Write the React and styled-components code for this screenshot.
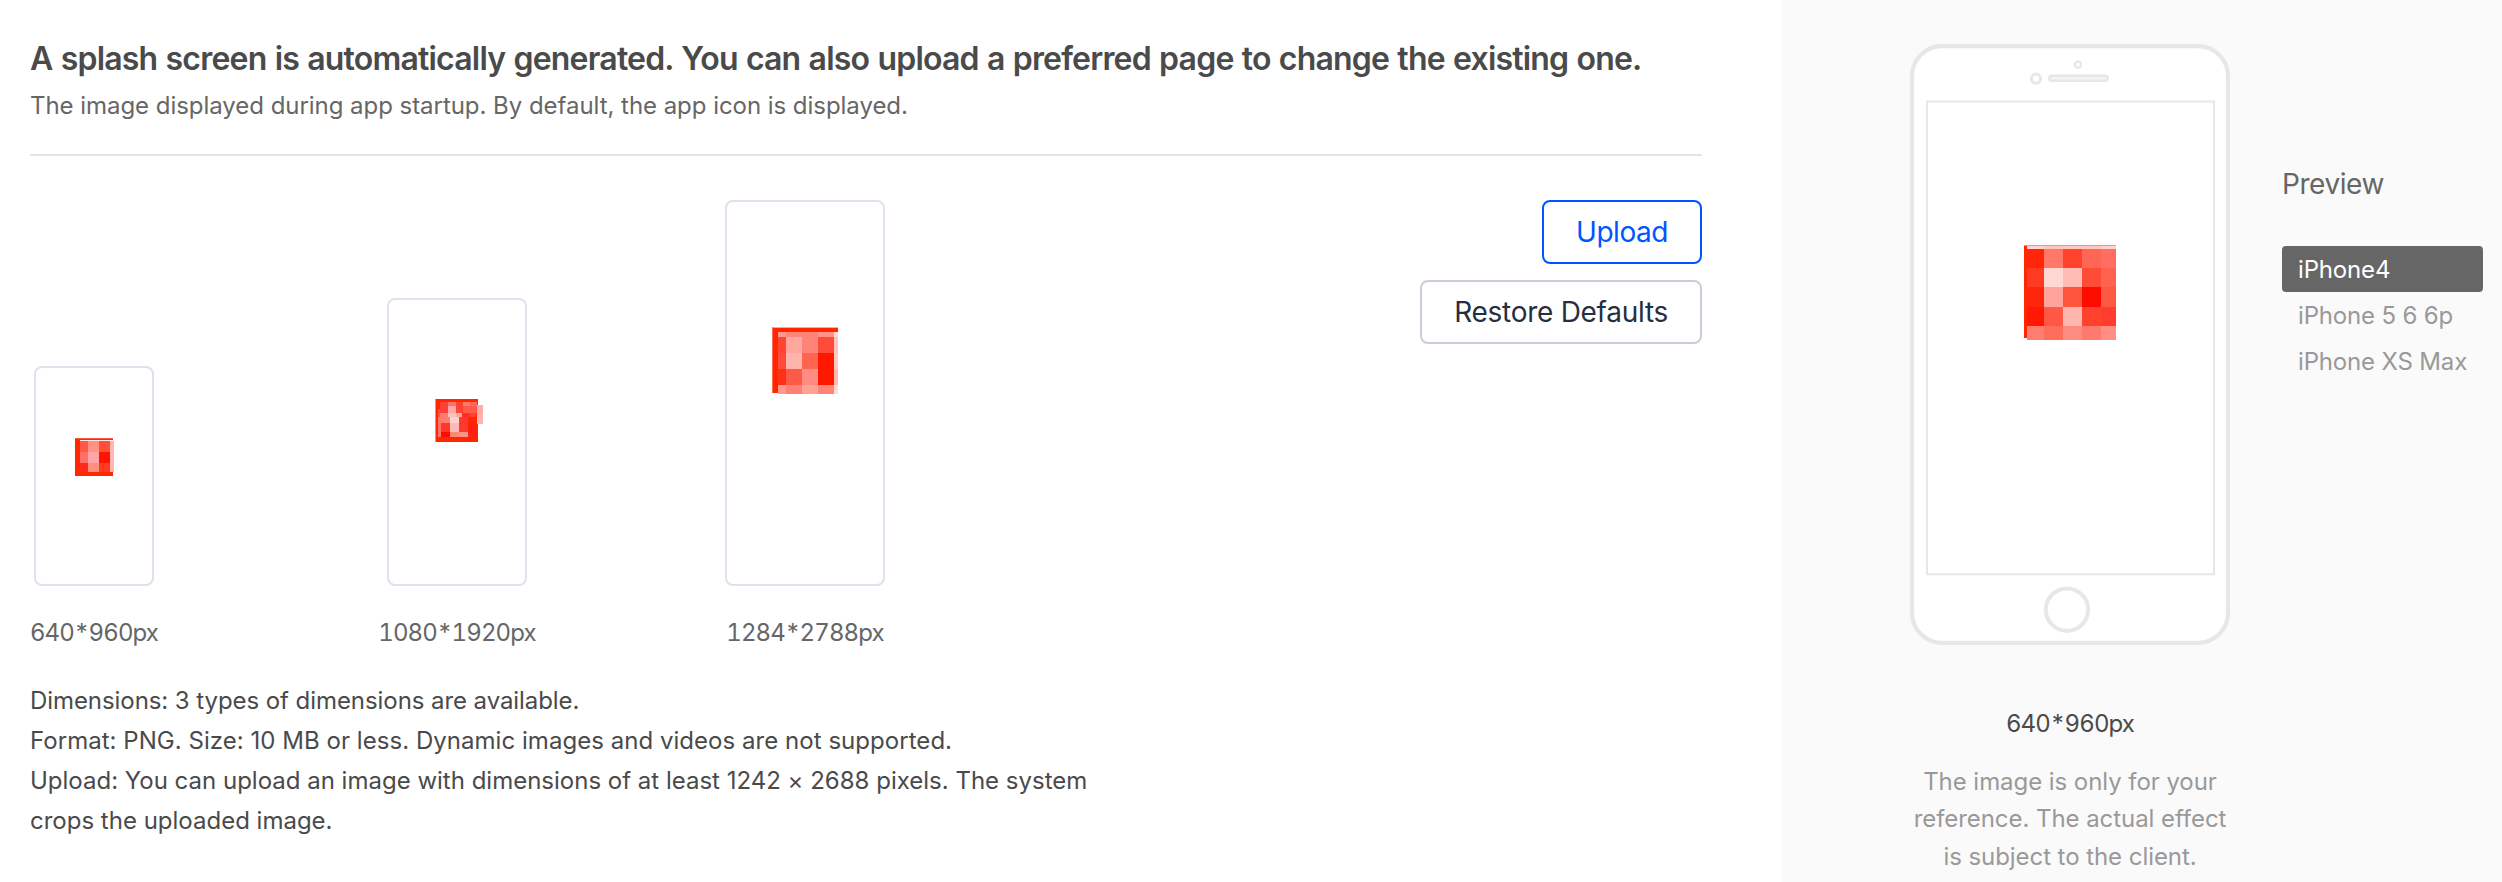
import React, { useState } from 'react'
import styled, { createGlobalStyle } from 'styled-components'

// every size inside the icons is counted in thirds of a pixel
const cells = (xs, ys, colors) =>
  colors.flatMap((row, r) =>
    row.split(' ').map((color, c) => [xs[c], ys[r], xs[c + 1] - xs[c], ys[r + 1] - ys[r], '#' + color])
  )

const smallIcon = [
  [0, 0, 114, 114, '#ff2600'],
  [0, 0, 114, 3, '#ff5a40'],
  [15, 6, 99, 3, '#ffe8e4'],
  ...cells([15, 39, 72, 105, 117], [9, 42, 75, 102], [
    'ff5846 ff9282 ff4f38 ffb8b0',
    'ff6f64 ffa5a8 ff1400 ffb8b8',
    'ff2a1e ff9080 ff3a20 ffb8b0',
  ]),
]

const mediumIcon = [
  [0, 0, 130, 129, '#ff2600'],
  [0, 0, 2, 129, '#ff8a78'],
  [128, 0, 2, 129, '#ff8a78'],
  [8, 30, 9, 24, '#ff5040'],
  [8, 54, 9, 60, '#ff7466'],
  ...cells([14, 38, 62, 83, 104, 125], [9, 21, 42], [
    'ff4038 ff7066 ff4030 ff7a6c ff6656',
    'ff4038 ffaaa8 ff4236 ff5a4c ff5a4c',
  ]),
  ...cells([14, 38, 62, 80, 104, 122], [42, 54], ['ff7a70 ffc0bc ffaaa0 ff3020 ff4232']),
  ...cells([17, 44, 71, 98, 122], [54, 72, 99, 114], [
    'ff7c70 ffd2d0 ff3a2c ff2600',
    'ff3828 ffb8b8 ff3a2c ff2010',
    'ff0c00 ff8878 ff9284 ff2018',
  ]),
  [125, 18, 20, 27, '#ffaaa8'],
  [125, 45, 20, 30, '#ffb4b0'],
]

const largeIcon = [
  [0, 0, 198, 198, '#ff2600'],
  [0, 0, 198, 3, '#ffa89c'],
  [0, 0, 3, 198, '#ff6a54'],
  ...cells([18, 42, 90, 138, 186, 198], [15, 30, 78, 126, 174, 201], [
    'ff9890 ff8478 ff8478 ff9488 ffd8d4',
    'ff4432 ffa69e ff8478 ff4c38 ffc4be',
    'ff4c3a ffb4ae ff6450 ff1800 ffc8c2',
    'ff3018 ff5a48 ff8c82 ff1800 ffb8b0',
    'ff9890 ff8074 ffa294 ff8478 ffdcd8',
  ]),
]

const previewIcon = [
  [0, 0, 276, 3, '#ff8a7c'],
  [0, 3, 9, 276, '#ff2600'],
  ...cells([9, 59, 116, 174, 231, 276], [3, 13, 70, 127, 185, 243, 285], [
    'ffd4d0 ffc4bc ffc8c0 ffc4bc ffd4d0',
    'ff260c ff7868 ff432c ff6656 ff6e60',
    'ff3a22 ffd8d4 ffbcb4 ff4c36 ff624e',
    'ff260c ffa49c ff543c ff0c00 ff5842',
    'ff1804 ff5846 ffb6ae ff422e ff3c2e',
    'ff7c70 ff6c5c ff8c84 ff7a6c ff8e84',
  ]),
]

const screens = [
  { size: '640*960px', column: 128, gap: 0, width: 120, height: 220, icon: smallIcon, left: 41, top: 72 },
  { size: '1080*1920px', column: 158, gap: 220, width: 140, height: 288, icon: mediumIcon, left: 48, top: 101 },
  { size: '1284*2788px', column: 160, gap: 189, width: 160, height: 386, icon: largeIcon, left: 47, top: 127 },
]

const phones = ['iPhone4', 'iPhone 5 6 6p', 'iPhone XS Max']

const Mosaic = ({ blocks }) => (
  <g transform="scale(0.33333)" shapeRendering="crispEdges">
    {blocks.map(([x, y, w, h, fill], i) => (
      <rect key={i} x={x} y={y} width={w} height={h} fill={fill} />
    ))}
  </g>
)

const Phone = () => (
  <svg width="320" height="601" viewBox="0 0 320 601" fill="none" stroke="#e7e7e7">
    <rect x="2" y="2.2" width="316" height="596.6" rx="30" fill="#fff" strokeWidth="4.2" />
    <circle cx="168" cy="20.7" r="3" strokeWidth="2.2" />
    <circle cx="126" cy="34.7" r="4.6" strokeWidth="3" />
    <rect x="139.3" y="31.7" width="58.4" height="5" rx="2.5" fill="#f3f3f3" strokeWidth="2.6" />
    <rect x="17" y="57.5" width="287" height="472.8" strokeWidth="2" />
    <circle cx="157" cy="565.7" r="21.2" strokeWidth="4" />
    <g transform="translate(114 201)" stroke="none">
      <Mosaic blocks={previewIcon} />
    </g>
  </svg>
)

const App = () => {
  const [phone, setPhone] = useState('iPhone4')

  return (
    <Page>
      <GlobalStyle />
      <Main>
        <Title>
          A splash screen is automatically generated. You can also upload a preferred page to change the existing one.
        </Title>
        <Description>The image displayed during app startup. By default, the app icon is displayed.</Description>
        <Divider />
        <Content>
          <Screens>
            {screens.map((item) => (
              <ScreenItem key={item.size} $width={item.column} $gap={item.gap}>
                <Frame $width={item.width} $height={item.height} $left={item.left} $top={item.top}>
                  <svg width="68" height="68">
                    <Mosaic blocks={item.icon} />
                  </svg>
                </Frame>
                <SizeLabel>{item.size}</SizeLabel>
              </ScreenItem>
            ))}
          </Screens>
          <Buttons>
            <Button $primary>Upload</Button>
            <Button>Restore Defaults</Button>
          </Buttons>
        </Content>
        <Notes>
          <Note $spacing="-0.07px">Dimensions: 3 types of dimensions are available.</Note>
          <Note $spacing="0.04px">Format: PNG. Size: 10 MB or less. Dynamic images and videos are not supported.</Note>
          <Note>
            Upload: You can upload an image with dimensions of at least 1242 × 2688 pixels. The system crops the uploaded
            image.
          </Note>
        </Notes>
      </Main>

      <Aside>
        <PhoneArea>
          <Phone />
          <PhoneSize>640*960px</PhoneSize>
          <Caption>The image is only for your reference. The actual effect is subject to the client.</Caption>
        </PhoneArea>
        <Menu>
          <MenuTitle>Preview</MenuTitle>
          {phones.map((name) => (
            <MenuItem key={name} $active={name === phone} onClick={() => setPhone(name)}>
              {name}
            </MenuItem>
          ))}
        </Menu>
      </Aside>
    </Page>
  )
}

export default App

const GlobalStyle = createGlobalStyle`
  * {
    box-sizing: border-box;
  }
  body {
    margin: 0;
    overflow: hidden;
    background: #fff;
    font-family: Inter, "Liberation Sans", sans-serif;
    font-size: 24px;
    line-height: 40px;
    color: #4a4a4a;
    font-feature-settings: "calt" 0;
  }
  svg {
    display: block;
  }
`

const Page = styled.div`
  display: flex;
  height: 882px;
`

const Main = styled.main`
  width: 1782px;
  padding: 37px 80px 0 30px;
`

const Title = styled.h1`
  margin: 0 0 5px;
  font-size: 32px;
  font-weight: 600;
  line-height: 44px;
  letter-spacing: -0.8px;
  word-spacing: 0.95px;
  white-space: nowrap;
`

const Description = styled.p`
  margin: 0;
  color: #666;
  letter-spacing: -0.042px;
`

const Divider = styled.hr`
  height: 2px;
  margin: 28px 0 44px;
  border: none;
  background: #e5e5e5;
`

const Content = styled.div`
  display: flex;
  justify-content: space-between;
`

const Screens = styled.div`
  display: flex;
  align-items: flex-end;
`

const ScreenItem = styled.div`
  display: flex;
  flex-direction: column;
  align-items: center;
  width: ${({ $width }) => $width}px;
  margin-left: ${({ $gap }) => $gap}px;
`

const Frame = styled.div`
  width: ${({ $width }) => $width}px;
  height: ${({ $height }) => $height}px;
  padding: ${({ $top, $left }) => `${$top - 2}px 0 0 ${$left - 2}px`};
  border: 2px solid #dfe1ec;
  border-radius: 8px;
`

const SizeLabel = styled.span`
  margin-top: 27px;
  color: #666;
  letter-spacing: -0.9px;
  font-variant-numeric: tabular-nums;
  white-space: nowrap;
`

const Buttons = styled.div`
  display: flex;
  flex-direction: column;
  align-items: flex-end;
  gap: 16px;
`

const Button = styled.button`
  height: 64px;
  padding: 0 32px;
  border: 2px solid ${({ $primary }) => ($primary ? '#0055ff' : '#c9ced8')};
  border-radius: 8px;
  background: #fff;
  color: ${({ $primary }) => ($primary ? '#0055ff' : '#252f3f')};
  font-family: inherit;
  font-size: 28px;
  letter-spacing: ${({ $primary }) => ($primary ? '-0.45px' : '-0.28px')};
  cursor: pointer;
`

const Notes = styled.div`
  width: 1100px;
  margin-top: 28px;
`

const Note = styled.p`
  margin: 0;
  letter-spacing: ${({ $spacing }) => $spacing || 'normal'};
`

const Aside = styled.aside`
  display: flex;
  align-items: flex-start;
  width: 720px;
  padding: 44px 0 0 128px;
  background: #fafafa;
`

const PhoneArea = styled.div`
  display: flex;
  flex-direction: column;
  align-items: center;
  width: 320px;
`

const PhoneSize = styled(SizeLabel)`
  margin-top: 59px;
  color: #4a4a4a;
`

const Caption = styled.p`
  margin: 18.5px 0 0;
  color: #999;
  line-height: 37.5px;
  letter-spacing: -0.06px;
  text-align: center;
`

const Menu = styled.div`
  width: 201px;
  margin: 120px 0 0 52px;
`

const MenuTitle = styled.div`
  margin-bottom: 42px;
  color: #666;
  font-size: 28px;
  letter-spacing: -0.445px;
`

const MenuItem = styled.div`
  height: 46px;
  padding: 1px 16px 0;
  border-radius: 4px;
  background: ${({ $active }) => ($active ? '#666' : 'transparent')};
  color: ${({ $active }) => ($active ? '#fff' : '#999')};
  line-height: 46px;
  letter-spacing: -0.16px;
  white-space: nowrap;
  cursor: pointer;
`
